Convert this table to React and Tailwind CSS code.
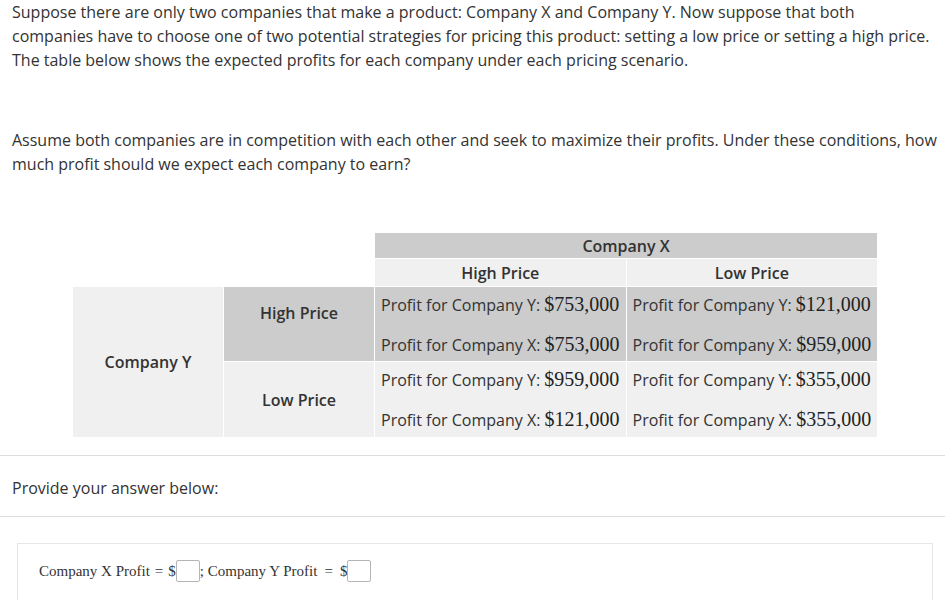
import React from 'react';

const rows = [
    {
        label: 'High Price',
        bg: 'bg-[#cccccc]',
        labelPad: 'align-top pt-[14px]',
        cells: [
            [['Y', '$753,000'], ['X', '$753,000']],
            [['Y', '$121,000'], ['X', '$959,000']],
        ],
    },
    {
        label: 'Low Price',
        bg: 'bg-[#f0f0f0]',
        labelPad: 'align-middle',
        cells: [
            [['Y', '$959,000'], ['X', '$121,000']],
            [['Y', '$355,000'], ['X', '$355,000']],
        ],
    },
];

const ProfitCell = ({ lines, bg }) => (
    <td className={`${bg} align-top px-[6px] pt-[6px] w-[250px]`}>
        {lines.map(([who, amount], i) => (
            <div key={i} className={`h-[24px] leading-[24px] whitespace-nowrap ${i === 1 ? 'mt-[16px]' : ''}`}>
                Profit for Company {who}:{' '}
                <span className="font-['Liberation_Serif',serif] text-[20px] leading-none text-[#222]">{amount}</span>
            </div>
        ))}
    </td>
);

const AnswerBox = () => (
    <span className="inline-block w-[24px] h-[22px] border border-[#b5b5b5] rounded-[2px] bg-white"></span>
);

const App = () => {
    return (
        <div className="w-[945px] h-[600px] overflow-hidden bg-white font-['Open_Sans',sans-serif] text-[16px] text-[#333]">
            <div className="pl-[12px] pr-[4px]">
                <p className="leading-[24px] pr-[8px]">
                    Suppose there are only two companies that make a product: Company X and Company Y. Now suppose that both
                    companies have to choose one of two potential strategies for pricing this product: setting a low price or setting a high price.
                    The table below shows the expected profits for each company under each pricing scenario.
                </p>
                <p className="leading-[24px] mt-[56px]">
                    Assume both companies are in competition with each other and seek to maximize their profits. Under these conditions, how
                    much profit should we expect each company to earn?
                </p>
            </div>

            <table className="ml-[72px] mt-[56px] border-separate border-spacing-px text-[#333]">
                <tbody>
                    <tr className="h-[25px]">
                        <td colSpan={2}></td>
                        <td colSpan={2} className="bg-[#cccccc] text-center font-semibold leading-[20px]">Company X</td>
                    </tr>
                    <tr className="h-[27px]">
                        <td colSpan={2}></td>
                        <td className="bg-[#f0f0f0] text-center font-semibold leading-[20px]">High Price</td>
                        <td className="bg-[#f0f0f0] text-center font-semibold leading-[20px]">Low Price</td>
                    </tr>
                    {rows.map((row, r) => (
                        <tr key={r} className={r === 0 ? 'h-[74px]' : 'h-[75px]'}>
                            {r === 0 && (
                                <td rowSpan={2} className="bg-[#f0f0f0] w-[150px] text-center align-middle font-semibold">
                                    Company Y
                                </td>
                            )}
                            <td className={`${row.bg} ${row.labelPad} w-[150px] text-center font-semibold leading-[24px]`}>
                                {row.label}
                            </td>
                            <ProfitCell lines={row.cells[0]} bg={row.bg} />
                            <ProfitCell lines={row.cells[1]} bg={row.bg} />
                        </tr>
                    ))}
                </tbody>
            </table>

            <div className="mt-[17px] border-t border-[#dddddd]"></div>
            <div className="h-[60px] px-[12px] pt-[20px] leading-[24px]">Provide your answer below:</div>
            <div className="border-t border-[#dddddd]"></div>

            <div className="ml-[17px] mr-[12px] mt-[26px] h-[120px] border border-[#e6e6e6] px-[21px] pt-[16px]">
                <div className="flex items-center font-['Liberation_Serif',serif] text-[15px] text-[#333] whitespace-pre">
                    <span>Company X Profit</span>
                    <span className="mx-[5px]">=</span>
                    <span>$</span>
                    <AnswerBox />
                    <span>; Company Y Profit</span>
                    <span className="mx-[7px]">=</span>
                    <span>$</span>
                    <AnswerBox />
                </div>
            </div>
        </div>
    );
};

export default App;
